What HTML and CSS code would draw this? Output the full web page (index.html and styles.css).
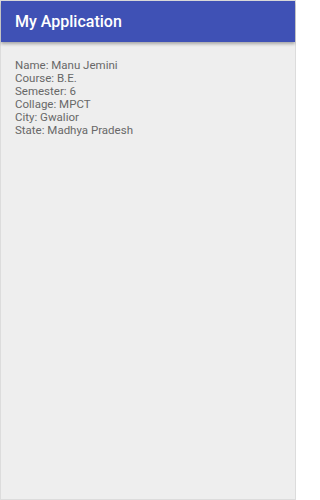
FILE: index.html
```html
<!DOCTYPE html>
<html>
<head>
<meta charset="utf-8">
<link rel="stylesheet" href="styles.css">
</head>
<body>
<div class="screen">
  <header class="appbar"><h1 class="title">My Application</h1></header>
  <main class="content">
    <p class="line">Name: Manu Jemini</p>
    <p class="line">Course: B.E.</p>
    <p class="line">Semester: 6</p>
    <p class="line">Collage: MPCT</p>
    <p class="line">City: Gwalior</p>
    <p class="line">State: Madhya Pradesh</p>
  </main>
</div>
</body>
</html>
```
FILE: styles.css
```css
html, body { margin: 0; padding: 0; }
body { width: 296px; height: 500px; font-family: Roboto, "Noto Sans", sans-serif; background: #fff; }
.screen {
  box-sizing: border-box;
  width: 296px; height: 500px;
  border: 1px solid #dcdcdc;
  background: #eeeeee;
  display: flex; flex-direction: column;
}
.appbar {
  height: 41px;
  background: #3f51b5;
  display: flex; align-items: center;
  padding: 0 14px;
  box-shadow: 0 2px 3px rgba(0,0,0,0.3);
  position: relative;
}
.title { margin: 0; color: #fff; font-size: 16px; font-weight: 500; }
.content { padding: 17px 14px; }
.line { margin: 0; color: #686868; font-size: 11.5px; line-height: 13px; }
```
